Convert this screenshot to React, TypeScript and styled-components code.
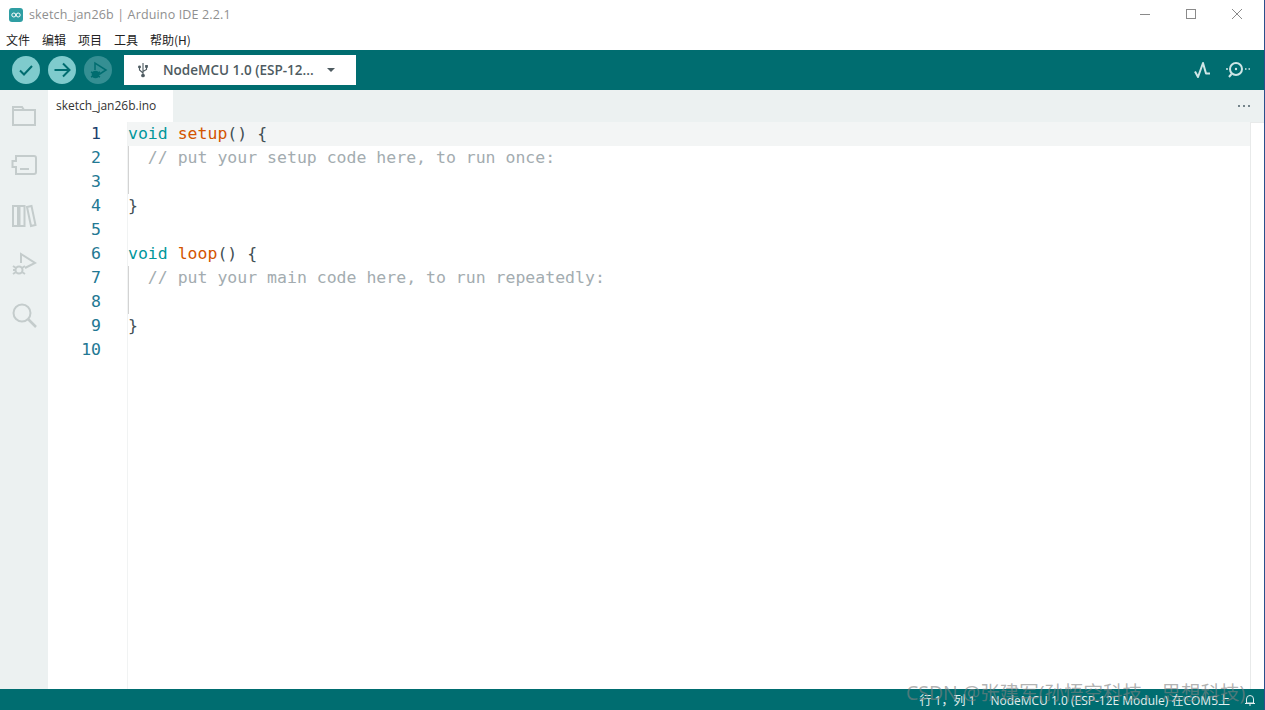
import React from "react";
import styled, { createGlobalStyle } from "styled-components";

const Global = createGlobalStyle`
  html, body { margin: 0; padding: 0; height: 100%; overflow: hidden; background: #fff; }
  #root { height: 100%; }
  * { box-sizing: border-box; }
`;

const Window = styled.div`
  position: relative;
  width: 1265px;
  height: 710px;
  display: flex;
  flex-direction: column;
  border-right: 1px solid #2b4f8c;
  font-family: "Noto Sans CJK SC", "Open Sans", sans-serif;
  overflow: hidden;
`;
const TitleBar = styled.div`
  height: 29px;
  display: flex;
  align-items: center;
  padding-left: 9px;
  gap: 6px;
  flex: none;
`;
const Logo = styled.svg`
  width: 14px;
  height: 14px;
`;
const TitleText = styled.span`
  font: 12.5px "Open Sans", sans-serif;
  color: #8f8f8f;
  letter-spacing: 0.15px;
`;
const WinControls = styled.div`
  margin-left: auto;
  display: flex;
  align-items: center;
  gap: 24px;
  padding-right: 16px;
  margin-top: -2px;
`;
const WinIcon = styled.svg`
  width: 22px;
  height: 14px;
  stroke: #8a8a8a;
  fill: none;
`;
const MenuBar = styled.div`
  height: 21px;
  display: flex;
  align-items: center;
  padding-left: 6px;
  gap: 12px;
  flex: none;
`;
const MenuItem = styled.span`
  font: 12px "Noto Sans CJK SC", sans-serif;
  color: #222;
`;
const Toolbar = styled.div`
  height: 40px;
  background: #006d70;
  display: flex;
  align-items: center;
  padding-left: 12px;
  flex: none;
`;
const RoundBtn = styled.div<{ $dim?: boolean }>`
  width: 28px;
  height: 28px;
  border-radius: 50%;
  background: ${(p) => (p.$dim ? "#358f93" : "#7fcbcd")};
  margin-right: 8px;
  display: flex;
  align-items: center;
  justify-content: center;
`;
const BoardSelect = styled.div`
  width: 232px;
  height: 30px;
  background: #fff;
  margin-left: 4px;
  display: flex;
  align-items: center;
  padding-left: 13px;
`;
const BoardName = styled.span`
  font: 600 13.5px "Open Sans", sans-serif;
  color: #4e5b61;
  margin-left: 14px;
  white-space: nowrap;
`;
const Caret = styled.span`
  width: 0;
  height: 0;
  border-left: 4px solid transparent;
  border-right: 4px solid transparent;
  border-top: 4px solid #4e5b61;
  margin-left: 13px;
`;
const ToolRight = styled.div`
  margin-left: auto;
  display: flex;
  align-items: center;
  gap: 12px;
  padding-right: 13px;
`;
const Main = styled.div`
  flex: 1;
  display: flex;
  min-height: 0;
`;
const SideBar = styled.div`
  width: 48px;
  background: #ecf1f1;
  display: flex;
  flex-direction: column;
  align-items: center;
  padding-top: 12px;
  gap: 24px;
  flex: none;
`;
const SideIcon = styled.svg`
  width: 26px;
  height: 26px;
  fill: none;
  stroke: #c4cccc;
  stroke-width: 2;
  display: block;
`;
const Content = styled.div`
  flex: 1;
  display: flex;
  flex-direction: column;
  min-width: 0;
`;
const TabBar = styled.div`
  height: 32px;
  background: #ecf1f1;
  display: flex;
  flex: none;
  align-items: stretch;
`;
const Tab = styled.div`
  width: 125px;
  background: #fff;
  display: flex;
  align-items: center;
  padding: 0 0 2px 8px;
  font: 12px "Open Sans", sans-serif;
  color: #333;
`;
const Dots = styled.div`
  margin-left: auto;
  padding-right: 14px;
  display: flex;
  align-items: center;
  gap: 3px;
`;
const Dot = styled.span`
  width: 2px;
  height: 2px;
  border-radius: 50%;
  background: #4c5f68;
`;
const Editor = styled.div`
  flex: 1;
  display: flex;
  min-height: 0;
  background: #fff;
`;
const Gutter = styled.div`
  width: 80px;
  flex: none;
  border-right: 1px solid #f1f3f3;
`;
const LineNo = styled.div<{ $active?: boolean }>`
  height: 24px;
  line-height: 24px;
  text-align: right;
  padding-right: 26px;
  font: 16.5px/24px "DejaVu Sans Mono", monospace;
  color: ${(p) => (p.$active ? "#1b3f6e" : "#237893")};
`;
const Code = styled.div`
  flex: 1;
  min-width: 0;
  position: relative;
`;
const Row = styled.div<{ $active?: boolean; $guide?: boolean }>`
  height: 24px;
  font: 16.5px/24px "DejaVu Sans Mono", monospace;
  white-space: pre;
  color: #434f54;
  background: ${(p) => (p.$active ? "#f3f5f5" : "transparent")};
  box-shadow: ${(p) => (p.$guide ? "inset 1px 0 0 #d3d3d3" : "none")};
`;
const Kw = styled.span`
  color: #00979c;
`;
const Fn = styled.span`
  color: #d35400;
`;
const Cm = styled.span`
  color: #a3acb0;
`;
const Scroll = styled.div`
  width: 14px;
  flex: none;
  border-left: 1px solid #e8eaea;
  border-top: 1px solid #e8eaea;
`;
const StatusBar = styled.div`
  height: 21px;
  background: #006d70;
  display: flex;
  align-items: center;
  justify-content: flex-end;
  flex: none;
  font: 12px "Open Sans", "Noto Sans CJK SC", sans-serif;
  color: #e3f0f0;
  padding-right: 8px;
`;
const Pos = styled.span`
  margin-right: 15px;
`;
const Bell = styled.svg`
  width: 12px;
  height: 12px;
  margin-left: 14px;
  stroke: #e3f0f0;
  fill: none;
`;
const Watermark = styled.div`
  position: absolute;
  left: 906px;
  top: 677px;
  font: 19.5px "Open Sans", "Noto Sans CJK SC", sans-serif;
  color: rgba(130, 130, 130, 0.62);
  white-space: nowrap;
  pointer-events: none;
`;

const menus = ["文件", "编辑", "项目", "工具", "帮助(H)"];

type Line = { n: number; guide?: boolean; body: React.ReactNode };
const lines: Line[] = [
  { n: 1, body: <><Kw>void</Kw> <Fn>setup</Fn>() {"{"}</> },
  { n: 2, guide: true, body: <Cm>  // put your setup code here, to run once:</Cm> },
  { n: 3, guide: true, body: " " },
  { n: 4, body: "}" },
  { n: 5, body: " " },
  { n: 6, body: <><Kw>void</Kw> <Fn>loop</Fn>() {"{"}</> },
  { n: 7, guide: true, body: <Cm>  // put your main code here, to run repeatedly:</Cm> },
  { n: 8, guide: true, body: " " },
  { n: 9, body: "}" },
  { n: 10, body: " " },
];

export default function App() {
  return (
    <Window>
      <Global />
      <TitleBar>
        <Logo viewBox="0 0 14 14">
          <rect width="14" height="14" rx="3" fill="#2f9ea3" />
          <circle cx="4.8" cy="7" r="2" fill="none" stroke="#fff" strokeWidth="1" />
          <circle cx="9.2" cy="7" r="2" fill="none" stroke="#fff" strokeWidth="1" />
        </Logo>
        <TitleText>sketch_jan26b | Arduino IDE 2.2.1</TitleText>
        <WinControls>
          <WinIcon viewBox="0 0 22 14"><path d="M6 7.5h10" /></WinIcon>
          <WinIcon viewBox="0 0 22 14"><rect x="6.5" y="2.5" width="9" height="9" /></WinIcon>
          <WinIcon viewBox="0 0 22 14"><path d="M6 2l10 10M16 2L6 12" /></WinIcon>
        </WinControls>
      </TitleBar>
      <MenuBar>
        {menus.map((m) => <MenuItem key={m}>{m}</MenuItem>)}
      </MenuBar>
      <Toolbar>
        <RoundBtn>
          <svg width="18" height="18" viewBox="0 0 18 18" fill="none" stroke="#006d70" strokeWidth="2"><path d="M3 9.5l4 4 8-8.5" /></svg>
        </RoundBtn>
        <RoundBtn>
          <svg width="20" height="20" viewBox="0 0 20 20" fill="none" stroke="#006d70" strokeWidth="2"><path d="M2.5 10h15M11 3.5l6.5 6.5-6.5 6.5" /></svg>
        </RoundBtn>
        <RoundBtn $dim>
          <svg width="22" height="22" viewBox="0 0 22 22" fill="none" stroke="#006d70" strokeWidth="1.5">
            <path d="M8 11V4l11 7-7 4.5" />
            <circle cx="8.5" cy="15.5" r="3" fill="#006d70" />
            <path d="M4 13l2 1M4 18l2-1M13 13l-2 1M13 18l-2-1" />
          </svg>
        </RoundBtn>
        <BoardSelect>
          <svg width="12" height="16" viewBox="0 0 12 16" fill="none" stroke="#4e5b61" strokeWidth="1.1">
            <path d="M6 1v14M6 11L2.5 8V5.5M6 9.5l3.5-2V5" />
            <circle cx="6" cy="13.5" r="1.3" fill="#4e5b61" />
            <circle cx="2.5" cy="5" r="0.9" fill="#4e5b61" />
            <rect x="8.7" y="3.6" width="1.6" height="1.6" fill="#4e5b61" />
          </svg>
          <BoardName>NodeMCU 1.0 (ESP-12...</BoardName>
          <Caret />
        </BoardSelect>
        <ToolRight>
          <svg width="20" height="20" viewBox="0 0 20 20" fill="none" stroke="#cfe6e6" strokeWidth="2" strokeLinejoin="round"><path d="M2 11.5l3 5.5L10 3l3 10.5h4" /></svg>
          <svg width="26" height="20" viewBox="0 0 26 20" fill="none" stroke="#cfe6e6" strokeWidth="2">
            <circle cx="11" cy="9" r="6" />
            <circle cx="11" cy="9" r="1.2" fill="#cfe6e6" stroke="none" />
            <path d="M6.5 14L4 17" />
            <path d="M1 9h2M20 9h1.5M23.5 9H25" strokeWidth="1.5" />
          </svg>
        </ToolRight>
      </Toolbar>
      <Main>
        <SideBar>
          <SideIcon viewBox="0 0 26 26"><path d="M2 5h9l2 3h11v15H2z M2 8h11" /></SideIcon>
          <SideIcon viewBox="0 0 26 26"><path d="M5 4h18a2 2 0 0 1 2 2v14a2 2 0 0 1-2 2H5v-7H1.5V9H5z M9 17h9" /></SideIcon>
          <SideIcon viewBox="0 0 26 26"><path d="M2 4h5v20H2z M8.500 4h5v20h-5z M16 5l4.500-1 4 19-4.500 1z" /></SideIcon>
          <SideIcon viewBox="0 0 26 26">
            <path d="M10 11V2l14 9-10 5" />
            <circle cx="8" cy="18" r="3.500" />
            <path d="M2 14l3 2M2 22l3-2M14 14l-3 2M14 22l-3-2M2 18h3" />
          </SideIcon>
          <SideIcon viewBox="0 0 26 26"><circle cx="11" cy="11" r="8.500" /><path d="M17 17l8 8" strokeWidth="2.500" /></SideIcon>
        </SideBar>
        <Content>
          <TabBar>
            <Tab>sketch_jan26b.ino</Tab>
            <Dots><Dot /><Dot /><Dot /></Dots>
          </TabBar>
          <Editor>
            <Gutter>
              {lines.map((l) => <LineNo key={l.n} $active={l.n === 1}>{l.n}</LineNo>)}
            </Gutter>
            <Code>
              {lines.map((l) => (
                <Row key={l.n} $active={l.n === 1} $guide={l.guide}>{l.body}</Row>
              ))}
            </Code>
            <Scroll />
          </Editor>
        </Content>
      </Main>
      <StatusBar>
        <Pos>行 1，列 1</Pos>
        <span>NodeMCU 1.0 (ESP-12E Module) 在COM5上</span>
        <Bell viewBox="0 0 12 12"><path d="M2.500 9V5a3.500 3.500 0 0 1 7 0v4zM1 9.500h10M5 11h2" /></Bell>
      </StatusBar>
      <Watermark>CSDN @张建军(孙悟空科技，思想科技)</Watermark>
    </Window>
  );
}
